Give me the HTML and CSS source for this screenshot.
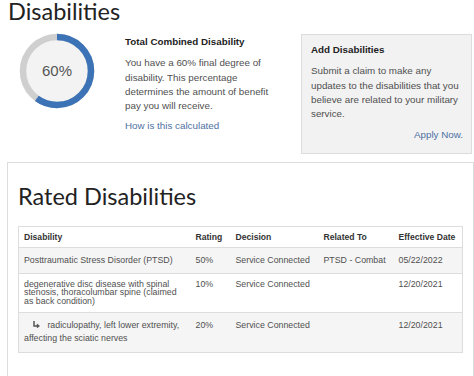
FILE: index.html
```html
<!DOCTYPE html>
<html lang="en">
<head>
    <meta charset="UTF-8">
    <meta name="viewport" content="width=device-width, initial-scale=1.0">
    <title>Disabilities</title>
    <link rel="stylesheet" href="styles.css">
</head>
<body>

    <h1 class="page-title">Disabilities</h1>

    <div class="summary">
        <div class="rating-ring">
            <svg width="78" height="78" viewBox="0 0 78 78">
                <circle cx="39" cy="39" r="34" fill="#f3f3f3" stroke="#cfcfcf" stroke-width="6.5"/>
                <circle cx="39" cy="39" r="34" fill="none" stroke="#3c73b6" stroke-width="6.5"
                        stroke-dasharray="128.2 213.6" transform="rotate(-90 39 39)"/>
            </svg>
            <span class="rating-value">60%</span>
        </div>

        <div class="combined">
            <div class="combined-title">Total Combined Disability</div>
            <p class="combined-text">You have a 60% final degree of disability. This percentage determines the amount of benefit pay you will receive.</p>
            <a class="link" href="#">How is this calculated</a>
        </div>

        <div class="add-box">
            <div class="add-title">Add Disabilities</div>
            <p class="add-text">Submit a claim to make any updates to the disabilities that you believe are related to your military service.</p>
            <div class="add-action"><a class="link" href="#">Apply Now.</a></div>
        </div>
    </div>

    <div class="rated-card">
        <h2 class="rated-title">Rated Disabilities</h2>

        <table class="rated-table">
            <colgroup>
                <col class="col-disability">
                <col class="col-rating">
                <col class="col-decision">
                <col class="col-related">
                <col>
            </colgroup>
            <thead>
                <tr>
                    <th>Disability</th>
                    <th>Rating</th>
                    <th>Decision</th>
                    <th>Related To</th>
                    <th>Effective Date</th>
                </tr>
            </thead>
            <tbody>
                <tr class="shaded">
                    <td>Posttraumatic Stress Disorder (PTSD)</td>
                    <td>50%</td>
                    <td>Service Connected</td>
                    <td>PTSD - Combat</td>
                    <td>05/22/2022</td>
                </tr>
                <tr class="tight">
                    <td>degenerative disc disease with spinal stenosis, thoracolumbar spine (claimed as back condition)</td>
                    <td>10%</td>
                    <td>Service Connected</td>
                    <td></td>
                    <td>12/20/2021</td>
                </tr>
                <tr class="shaded loose">
                    <td>
                        <svg class="sub-arrow" width="7" height="7" viewBox="0 0 7 7">
                            <path d="M1 0 V5 H4" fill="none" stroke="#555" stroke-width="1.5"/>
                            <path d="M3.8 2.6 L7 5 L3.8 7.4 Z" fill="#555"/>
                        </svg>
                        radiculopathy, left lower extremity, affecting the sciatic nerves
                    </td>
                    <td>20%</td>
                    <td>Service Connected</td>
                    <td></td>
                    <td>12/20/2021</td>
                </tr>
            </tbody>
        </table>
    </div>

</body>
</html>
```

FILE: styles.css
```css
body {
    font-family: 'Liberation Sans', Arial, sans-serif;
    margin: 0;
    padding: 0;
    background-color: #fff;
    color: #505050;
    overflow: hidden;
}

.page-title {
    font-family: 'Lato', sans-serif;
    font-weight: 400;
    font-size: 23.5px;
    line-height: 24px;
    margin: -1px 0 0 8px;
    color: #222;
}

.summary {
    display: flex;
    align-items: flex-start;
    margin-top: 9px;
    font-size: 9.8px;
    line-height: 14.3px;
}

.rating-ring {
    position: relative;
    width: 78px;
    height: 78px;
    margin-left: 18px;
}

.rating-ring svg {
    display: block;
}

.rating-value {
    position: absolute;
    top: 0;
    left: 0;
    width: 78px;
    line-height: 78px;
    text-align: center;
    font-size: 15px;
    color: #555;
}

.combined {
    width: 155px;
    margin: 3px 0 0 29px;
}

.combined-title,
.add-title {
    font-weight: 700;
    color: #222;
}

.combined-text {
    margin: 7px 0 6px;
}

.link {
    color: #4d70a3;
    text-decoration: none;
}

.add-box {
    width: 152px;
    margin: 2px 0 0 21px;
    padding: 8px 8px 10px 9px;
    background: #f2f2f2;
    border: 1px solid #dcdcdc;
}

.add-text {
    margin: 7px 0 7px;
}

.add-action {
    text-align: right;
}

.rated-card {
    margin: 8px 0 0 7px;
    padding: 19px 10px 40px;
    border: 1px solid #ddd;
}

.rated-title {
    font-family: 'Lato', sans-serif;
    font-weight: 400;
    font-size: 23.5px;
    line-height: 29px;
    margin: 0 0 15px;
    color: #222;
}

.rated-table {
    width: 100%;
    table-layout: fixed;
    border-collapse: collapse;
    border: 1px solid #ddd;
    font-size: 8.8px;
}

.col-disability { width: 172px; }
.col-rating { width: 40px; }
.col-decision { width: 88px; }
.col-related { width: 75px; }

.rated-table th {
    text-align: left;
    font-size: 8.6px;
    font-weight: 700;
    color: #333;
    padding: 5px;
    line-height: 10px;
    white-space: nowrap;
}

.rated-table td {
    vertical-align: top;
    padding: 6px 5px 7px;
    line-height: 12px;
    border-top: 1px solid #ddd;
}

.rated-table td + td {
    white-space: nowrap;
}

.rated-table .shaded {
    background: #f5f5f5;
}

.rated-table .tight td {
    line-height: 8.5px;
}

.rated-table .loose td {
    line-height: 13px;
}

.sub-arrow {
    margin: 0 5px 0 9px;
    vertical-align: 0;
}
```
